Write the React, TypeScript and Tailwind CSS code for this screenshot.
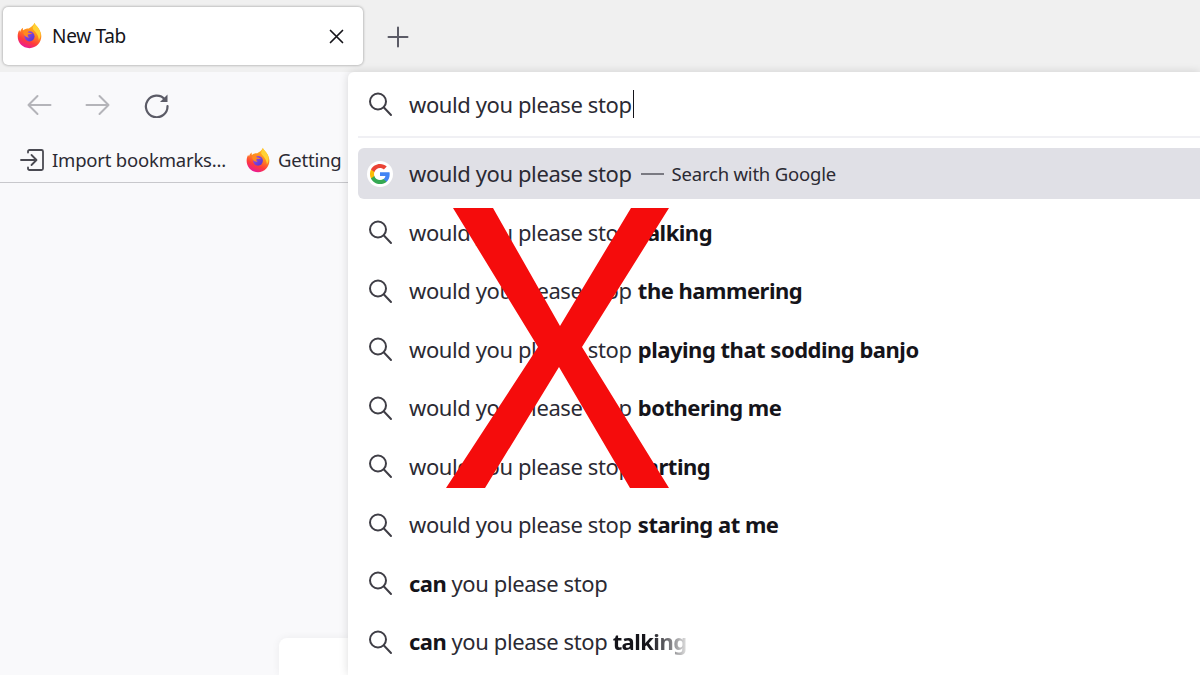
import React from "react";

function Fox({ id, size, className }: { id: string; size: number; className?: string }) {
  return (
    <svg width={size} height={size} viewBox="0 0 32 32" className={className}>
      <defs>
        <linearGradient id={id + "a"} x1="0.75" y1="0.05" x2="0.35" y2="1">
          <stop offset="0" stopColor="#ffbd1f" />
          <stop offset="0.4" stopColor="#ff8a1f" />
          <stop offset="0.72" stopColor="#ff3b3b" />
          <stop offset="1" stopColor="#e8179a" />
        </linearGradient>
        <linearGradient id={id + "b"} x1="0" y1="0" x2="1" y2="1">
          <stop offset="0" stopColor="#a04ae6" />
          <stop offset="1" stopColor="#4f35cf" />
        </linearGradient>
      </defs>
      <path d="M22 1c1 3 3 4 5 7 2 3 3 6 3 9 0 7.500-6 14-14 14S2 25 2 17c0-3 .8-5.500 2-7.500 0 1 .4 1.800 1 2.200.3-2.200 1.600-4 3.400-5-.4 1.400-.3 2.400.2 3 1.600-1.400 3.600-2 6.400-2 2.500-1.500 5.500-3 7-6.700z" fill={`url(#${id}a)`} />
      <path d="M22 2c2.500 3 6 5.500 7 11 .4 3-.4 6-2 8.500-.2-3-1-5.500-2.500-7.500-1.500-2.500-3.500-4-4.500-6-.4-2 .8-4 2-6z" fill="#ffd234" />
      <circle cx="16" cy="17" r="6" fill={`url(#${id}b)`} />
      <path d="M9 11c2-1.500 5-2.500 8-1.500-1.500.5-3 1.500-3 3 2 .5 4 .5 6 2-1-.5-3 .5-5 0-2 1-1 3 1 3.500-3 1-6-1-7-4-.5-1 0-2 0-3z" fill="#ff8a1f" />
    </svg>
  );
}

function Search() {
  return (
    <svg width="26" height="26" viewBox="0 0 26 26" fill="none" stroke="#3f3e46" strokeWidth="2" strokeLinecap="round" className="shrink-0">
      <circle cx="11" cy="10.500" r="8" />
      <path d="M16.700 16.300 24 24" />
    </svg>
  );
}

function G() {
  return (
    <div className="flex h-[26px] w-[26px] shrink-0 items-center justify-center rounded-full bg-white">
      <svg width="22" height="22" viewBox="0 0 48 48">
        <path fill="#4285F4" d="M45.120 24.500c0-1.560-.14-3.060-.4-4.500H24v8.510h11.840c-.51 2.750-2.060 5.080-4.390 6.640v5.520h7.110c4.160-3.830 6.560-9.470 6.560-16.170z" />
        <path fill="#34A853" d="M24 46c5.940 0 10.920-1.970 14.560-5.330l-7.110-5.520c-1.970 1.320-4.490 2.100-7.450 2.100-5.730 0-10.580-3.870-12.310-9.070H4.340v5.700C7.960 41.070 15.400 46 24 46z" />
        <path fill="#FBBC05" d="M11.690 28.180C11.250 26.860 11 25.450 11 24s.25-2.860.69-4.180v-5.700H4.340C2.850 17.090 2 20.450 2 24c0 3.550.85 6.910 2.340 9.880l7.350-5.700z" />
        <path fill="#EA4335" d="M24 10.750c3.230 0 6.130 1.110 8.410 3.290l6.310-6.310C34.910 4.180 29.930 2 24 2 15.400 2 7.960 6.930 4.340 14.120l7.350 5.700c1.730-5.200 6.580-9.070 12.310-9.070z" />
      </svg>
    </div>
  );
}

const rows: [string, string, string][] = [
  ["", "would you please stop ", "talking"],
  ["", "would you please stop ", "the hammering"],
  ["", "would you please stop ", "playing that sodding banjo"],
  ["", "would you please stop ", "bothering me"],
  ["", "would you please stop ", "farting"],
  ["", "would you please stop ", "staring at me"],
  ["can", " you please stop", ""],
];

export default function App() {
  return (
    <div className="relative flex h-[675px] w-[1200px] flex-col overflow-hidden bg-[#f9f9fb] font-['Noto_Sans','Open_Sans',sans-serif] text-[#2b2a33]">
      {/* tab strip */}
      <div className="flex h-[72px] shrink-0 items-start bg-[#f0f0f0] pl-[3px] pt-[7px]">
        <div className="flex h-[58px] w-[360px] items-center rounded-[5px] bg-white pl-[13px] pr-[19px] shadow-[0_0_3px_rgba(0,0,0,0.4)]">
          <Fox id="t" size={27} className="-mt-[2px]" />
          <span className="ml-[9px] flex-1 pt-[1px] text-[19px] tracking-[-0.3px] text-[#15141a]">New Tab</span>
          <svg width="15" height="15" viewBox="0 0 15 15" stroke="#15141a" strokeWidth="1.700" strokeLinecap="round">
            <path d="M1.500 1.500 13.500 13.500M13.500 1.500 1.500 13.500" />
          </svg>
        </div>
        <svg width="22" height="22" viewBox="0 0 22 22" stroke="#5b5b66" strokeWidth="2" strokeLinecap="round" className="ml-[24px] mt-[19px]">
          <path d="M11 1.500v19M1.500 11h19" />
        </svg>
      </div>

      <div className="flex min-h-0 flex-1">
        {/* left: toolbar + bookmarks + page */}
        <div className="flex w-[348px] shrink-0 flex-col">
          <div className="flex h-[66px] items-center gap-[34px] pl-[27px]">
            <svg width="25" height="22" viewBox="0 0 25 22" fill="none" stroke="#b4b4b9" strokeWidth="2" strokeLinecap="round" strokeLinejoin="round">
              <path d="M23.500 11H1.500M10.500 2 1.500 11l9 9" />
            </svg>
            <svg width="25" height="22" viewBox="0 0 25 22" fill="none" stroke="#b4b4b9" strokeWidth="2" strokeLinecap="round" strokeLinejoin="round" className="-ml-[1px]">
              <path d="M1.500 11h22M14.500 2l9 9-9 9" />
            </svg>
            <svg width="25" height="25" viewBox="0 0 25 25" fill="none" stroke="#5b5b66" strokeWidth="2.200" strokeLinecap="round">
              <path d="M21 6.500A10.800 10.800 0 1 0 23.500 13" />
              <path d="M23.500 1.500v7.500h-7.500z" fill="#5b5b66" stroke="none" />
            </svg>
          </div>
          <div className="flex h-[45px] items-center border-b border-[#c8c8cc] pl-[20px]">
            <svg width="25" height="22" viewBox="0 0 25 22" fill="none" stroke="#4a4a52" strokeWidth="1.800" strokeLinecap="round" strokeLinejoin="round">
              <path d="M8 3.500V2.500a1.500 1.500 0 0 1 1.500-1.500h12A1.500 1.500 0 0 1 23 2.500v17a1.500 1.500 0 0 1-1.500 1.500h-12A1.500 1.500 0 0 1 8 19.500v-1" />
              <path d="M1 11h15M11.500 6l5 5-5 5" />
            </svg>
            <span className="ml-[7px] text-[18.500px] tracking-[-0.2px] text-[#2b2a33]">Import bookmarks...</span>
            <Fox id="b" size={26} className="-mt-[1px] ml-[19px] shrink-0" />
            <span className="ml-[7px] text-[18.500px] tracking-[-0.2px] text-[#2b2a33]">Getting</span>
          </div>
          <div className="flex flex-1 items-end justify-end">
            <div className="h-[37px] w-[69px] rounded-tl-[8px] bg-white shadow-[0_0_8px_rgba(0,0,0,0.06)]" />
          </div>
        </div>

        {/* urlbar panel */}
        <div className="z-10 flex flex-1 flex-col rounded-tl-[6px] bg-white pl-[10px] text-[22px] tracking-[-0.4px] shadow-[0_0_10px_rgba(0,0,0,0.14)]">
          <div className="flex h-[66px] shrink-0 items-center border-b-2 border-[#f0f0f4] pl-[9px]">
            <Search />
            <span className="ml-[16px] pt-[1px] text-[#2b2a33]">would you please stop</span>
            <span className="ml-[1px] h-[28px] w-[1.500px] bg-[#15141a]" />
          </div>
          <div className="mt-[10px] flex h-[51px] shrink-0 items-center rounded-l-[6px] bg-[#e0e0e6] pl-[9px]">
            <G />
            <span className="ml-[16px]">would you please stop</span>
            <span className="ml-[9px] h-[2px] w-[23px] bg-[#7a7a82]" />
            <span className="ml-[8px] pt-[1px] text-[18.500px] tracking-[-0.2px]">Search with Google</span>
          </div>
          <div className="mt-[4px] flex flex-col">
            {rows.map(([a, b, c], i) => (
              <div key={i} className="flex h-[58.500px] shrink-0 items-center whitespace-pre pl-[9px]">
                <Search />
                <span className="ml-[16px]">
                  {a && <b className="font-bold tracking-[-0.55px] text-[#15141a]">{a}</b>}
                  {b}
                  {c && <b className="ml-[1px] font-bold tracking-[-0.5px] text-[#15141a]">{c}</b>}
                </span>
              </div>
            ))}
            <div className="flex h-[58.500px] shrink-0 items-center whitespace-pre pl-[9px]">
              <Search />
              <span className="ml-[16px]">
                <b className="font-bold tracking-[-0.55px] text-[#15141a]">can</b> you please stop{" "}
                <b className="bg-linear-to-r from-[#15141a] from-50% to-[#dddddd] bg-clip-text font-bold tracking-[-0.55px] text-transparent">talking</b>
              </span>
            </div>
          </div>
        </div>
      </div>

      {/* red cross over the list */}
      <svg width="225" height="280" viewBox="0 0 225 280" className="absolute left-[445px] top-[208px] z-20">
        <polygon
          fill="#f50c0c"
          points="8,0 48,0 115,118 186,0 224,0 137,139 224,280 185,280 114,159 40,280 1,280 93,139"
        />
      </svg>
    </div>
  );
}
